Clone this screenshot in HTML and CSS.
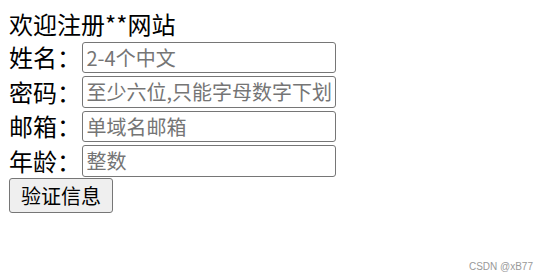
FILE: index.html
```html
<!DOCTYPE html>
<html lang="zh-CN">
<head>
<meta charset="utf-8">
<title>欢迎注册</title>
<link rel="stylesheet" href="styles.css">
</head>
<body>
<form class="form">
  <div class="title">欢迎注册**网站</div>
  <div class="row"><span class="label">姓名：</span><input class="field" type="text" placeholder="2-4个中文"></div>
  <div class="row"><span class="label">密码：</span><input class="field" type="text" placeholder="至少六位,只能字母数字下划线"></div>
  <div class="row"><span class="label">邮箱：</span><input class="field" type="text" placeholder="单域名邮箱"></div>
  <div class="row"><span class="label">年龄：</span><input class="field" type="text" placeholder="整数"></div>
  <button class="btn" type="button">验证信息</button>
</form>
<div class="watermark">CSDN @xB77</div>
</body>
</html>
```
FILE: styles.css
```css
html, body {
  margin: 0;
  padding: 0;
  background: #ffffff;
}
body {
  width: 548px;
  height: 279px;
  position: relative;
  overflow: hidden;
  font-family: "Noto Sans CJK SC", "Noto Sans", sans-serif;
  color: #000;
}
.form {
  display: flex;
  flex-direction: column;
  align-items: flex-start;
  padding: 8px 9px 0;
}
.title {
  height: 32px;
  line-height: 32px;
  font-size: 24px;
}
.row {
  display: flex;
  align-items: center;
  height: 34.5px;
}
.label {
  font-size: 24px;
  line-height: 32px;
  width: 72.5px;
  white-space: nowrap;
}
.field {
  box-sizing: border-box;
  width: 254px;
  height: 31.5px;
  margin: 0;
  padding: 0 4px;
  border: 1px solid #767676;
  border-radius: 3px;
  font-family: "Noto Sans CJK SC", "Noto Sans", sans-serif;
  font-size: 20px;
  color: #000;
  background: #fff;
  outline: none;
}
.field::placeholder {
  color: #757575;
  opacity: 1;
}
.btn {
  box-sizing: border-box;
  margin-top: -0.5px;
  width: 104px;
  height: 35px;
  padding: 0;
  border: 1px solid #767676;
  border-radius: 3px;
  background: #efefef;
  font-family: "Noto Sans CJK SC", "Noto Sans", sans-serif;
  font-size: 20px;
  color: #000;
}
.watermark {
  position: absolute;
  right: 15px;
  bottom: 7px;
  font-family: "Liberation Sans", Arial, sans-serif;
  font-size: 10px;
  color: #999;
}
```
